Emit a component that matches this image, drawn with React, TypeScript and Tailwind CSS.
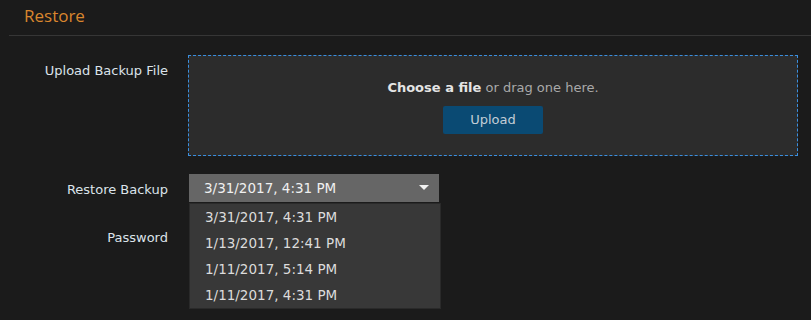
import { useState } from 'react'

const backups = ['3/31/2017, 4:31 PM', '1/13/2017, 12:41 PM', '1/11/2017, 5:14 PM', '1/11/2017, 4:31 PM']

export default function App() {
  const [selected, setSelected] = useState(backups[0])

  return (
    <div className="w-[811px] h-[320px] overflow-hidden bg-[#1b1b1b] font-['DejaVu_Sans',sans-serif] text-[13px]">
      {/* Header */}
      <div className="ml-[9px] border-b border-[#363636] h-[36px] pl-[15px] pt-[5px]">
        <h2 className="font-['Open_Sans',sans-serif] text-[17px] leading-[22px] text-[#d9862e]">Restore</h2>
      </div>

      <div className="flex flex-col pt-[19px]">
        {/* Upload */}
        <div className="flex">
          <div className="w-[168px] shrink-0 text-right text-[#dce3ea] pt-[6px]">Upload Backup File</div>
          <div className="ml-[20px] w-[610px] h-[101px] border border-dashed border-[#3a8fe0] bg-[#2c2c2c] flex flex-col items-center pt-[22px]">
            <p className="text-[#a9a9a9]">
              <span className="font-bold text-[#e4e4e4]">Choose a file</span> or drag one here.
            </p>
            <button className="mt-[8px] w-[100px] h-[28px] rounded-[2px] bg-[#0a4a73] text-[#c3cdd6]">
              Upload
            </button>
          </div>
        </div>

        {/* Restore backup */}
        <div className="flex mt-[18px]">
          <div className="w-[168px] shrink-0 text-right text-[#dce3ea] pt-[6px]">Restore Backup</div>
          <div className="ml-[21px] relative">
            <div className="w-[250px] h-[28px] bg-[#666666] flex items-center justify-between pl-[15px] pr-[10px] text-[13.5px] text-[#f0f0f0]">
              <span>{selected}</span>
              <svg width="10" height="6" viewBox="0 0 10 6">
                <path d="M0 0h10L5 5z" fill="#f2f2f2" />
              </svg>
            </div>
            <ul className="absolute left-0 top-[29px] w-[252px] bg-[#383838] border border-[#2a2a2a] text-[13.5px] text-[#dcdcdc]">
              {backups.map((b) => (
                <li
                  key={b}
                  onClick={() => setSelected(b)}
                  className="h-[26px] leading-[26px] pl-[15px] cursor-pointer hover:bg-[#444]"
                >
                  {b}
                </li>
              ))}
            </ul>
          </div>
        </div>

        {/* Password */}
        <div className="flex mt-[26px]">
          <div className="w-[168px] shrink-0 text-right text-[#dce3ea]">Password</div>
        </div>
      </div>
    </div>
  )
}
